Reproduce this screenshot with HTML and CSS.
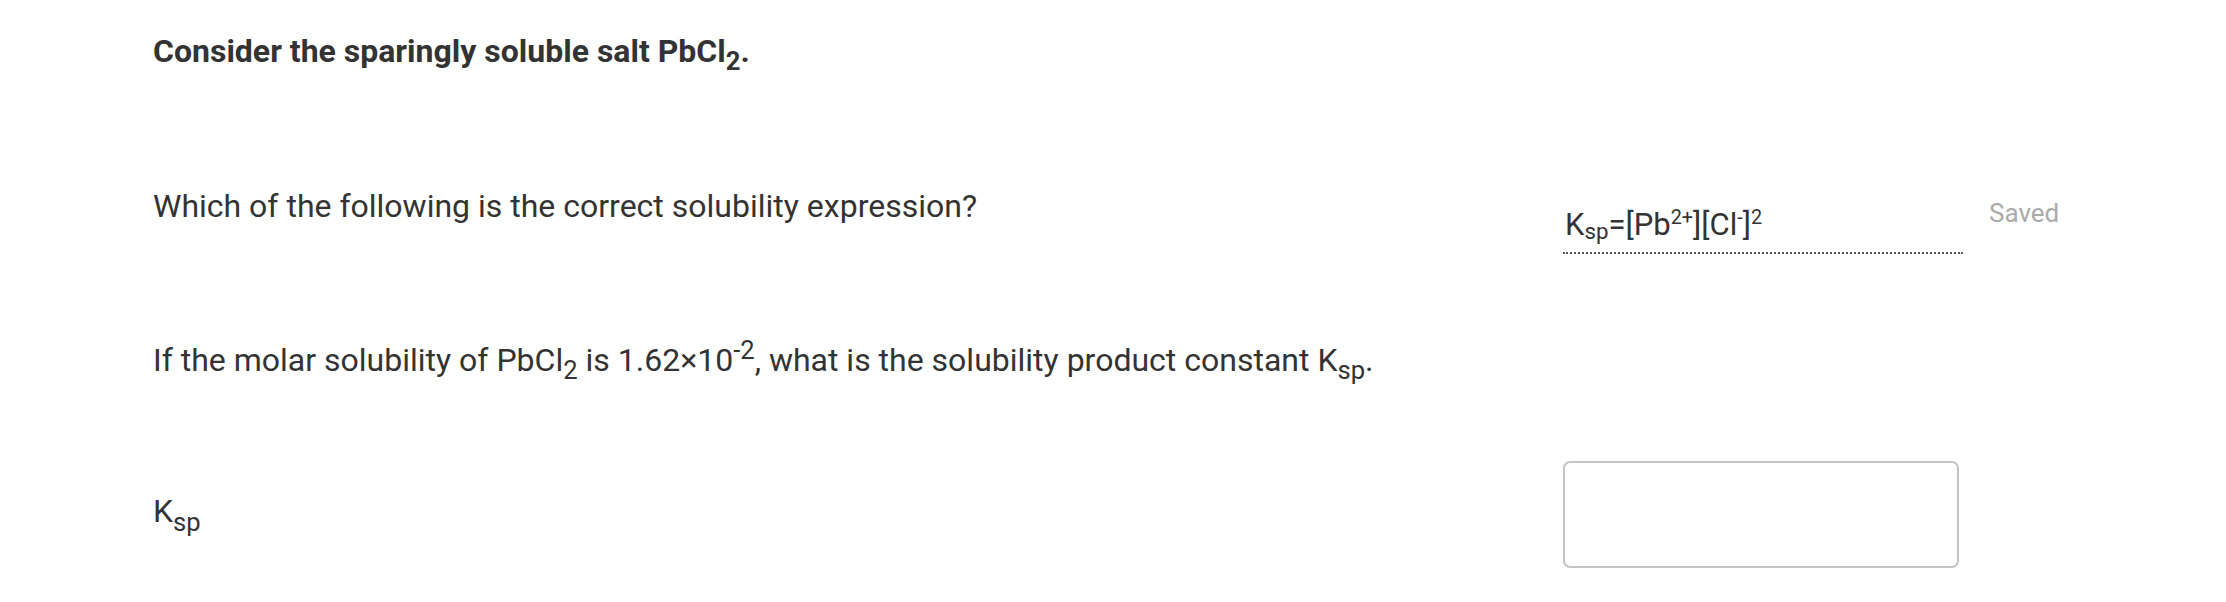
FILE: index.html
```html
<!DOCTYPE html>
<html>
<head>
<meta charset="utf-8">
<link rel="stylesheet" href="styles.css">
</head>
<body>
<div class="page">
  <div class="title">Consider the sparingly soluble salt PbCl<sub>2</sub>.</div>

  <div class="row row-q1">
    <div class="left q">Which of the following is the correct solubility expression?</div>
    <div class="answer">
      <div class="select">K<sub class="ssub">sp</sub>=[Pb<span class="ssup">2+</span>][Cl<span class="ssup">-</span>]<span class="ssup">2</span></div>
    </div>
    <div class="saved">Saved</div>
  </div>

  <div class="row row-q2">
    <div class="left q">If the molar solubility of PbCl<sub>2</sub> is 1.62×10<sup>-2</sup>, what is the solubility product constant K<sub>sp</sub>.</div>
  </div>

  <div class="row row-q3">
    <div class="left q label">K<sub class="lsub">sp</sub></div>
    <div class="answer">
      <div class="input"></div>
    </div>
  </div>
</div>
</body>
</html>
```

FILE: styles.css
```css
html, body {
  margin: 0;
  padding: 0;
  background: #ffffff;
}
body {
  font-family: Roboto, "Liberation Sans", sans-serif;
  color: #333333;
  width: 2226px;
  height: 602px;
  overflow: hidden;
}
.page {
  padding-left: 153px;
  padding-top: 33px;
}
.title {
  font-weight: 700;
  font-size: 32px;
  line-height: 37px;
  color: #333;
}
.title sub {
  font-size: 0.8em;
  line-height: 0;
  vertical-align: -0.3em;
}
.row {
  display: flex;
  align-items: flex-start;
}
.row-q1 { margin-top: 118px; }
.row-q2 { margin-top: 88px; }
.row-q3 { margin-top: 83px; }
.left {
  width: 1410px;
  flex: none;
}
.q {
  font-size: 32px;
  line-height: 36px;
  color: #333;
}
.q sub {
  font-size: 0.8em;
  line-height: 0;
  vertical-align: -0.3em;
}
.q sup {
  font-size: 0.8em;
  line-height: 0;
  vertical-align: 0.45em;
}
.answer {
  width: 400px;
  flex: none;
}
.select {
  margin-top: 20px;
  font-size: 31px;
  line-height: 34px;
  padding-bottom: 10px;
  padding-left: 2px;
  border-bottom: 2px dotted #555;
  color: #333;
}
.ssub {
  font-size: 0.72em;
  line-height: 0;
  vertical-align: -0.2em;
}
.ssup {
  font-size: 0.64em;
  line-height: 0;
  vertical-align: 0.55em;
}
.saved {
  margin-left: 26px;
  margin-top: 10px;
  font-size: 26px;
  line-height: 30px;
  color: #aaaaaa;
}
.label {
  padding-top: 32px;
}
.label .lsub {
  font-size: 0.8em;
  vertical-align: -0.35em;
}
.input {
  box-sizing: border-box;
  width: 396px;
  height: 107px;
  border: 2px solid #c4c4c4;
  border-radius: 7px;
  background: #fff;
}
```
